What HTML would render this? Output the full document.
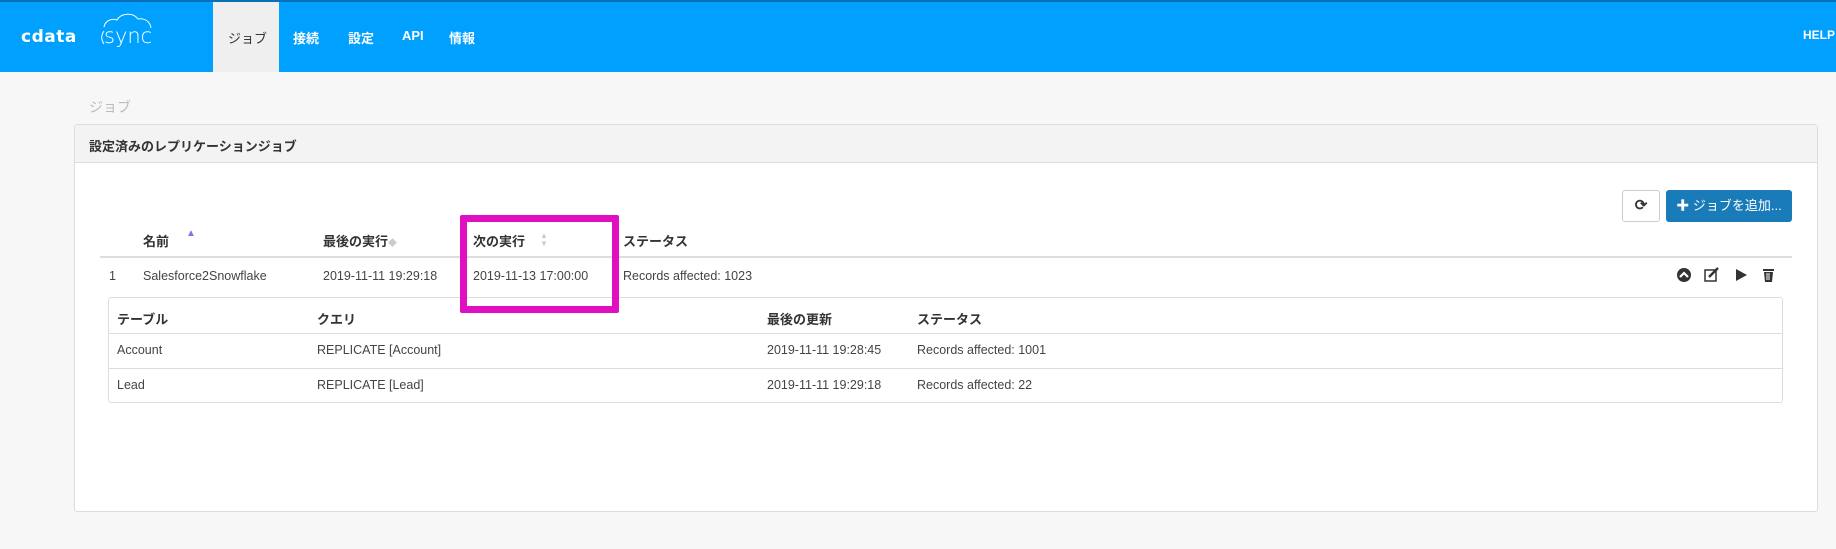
<!DOCTYPE html>
<html><head><meta charset="utf-8"><style>
*{margin:0;padding:0;box-sizing:border-box}
body{width:1836px;height:549px;background:#f7f7f7;font-family:"Liberation Sans","Noto Sans CJK JP",sans-serif;color:#444;position:relative;overflow:hidden;font-size:12.5px}
.a{position:absolute;white-space:nowrap}
.hdr{position:absolute;left:0;top:0;width:1836px;height:72px;background:#00a0ff;border-top:2px solid #0a6fb8}
.nav{color:#fff;font-weight:bold;font-size:13px;top:28px}
.b{font-weight:bold;color:#333;font-size:13px}
.l{position:absolute;height:1px;background:#ddd}
</style></head><body>
<div class="hdr"></div>
<div class="a" style="left:213px;top:2px;width:66px;height:70px;background:#efefef"></div>
<svg class="a" style="left:0;top:0" width="170" height="60" viewBox="0 0 170 60">
<path d="M104 27 C105 21 111 18 117 20 C121 13 133 12 138 19 C144 18 150 21 151 28" fill="none" stroke="#fff" stroke-width="1"/>
<path d="M104 31 C101 35 101 40 104 44" fill="none" stroke="#fff" stroke-width="1"/>
<text x="21" y="42" fill="#fff" font-family="DejaVu Sans" font-weight="bold" font-size="17" letter-spacing="0.5">cdata</text>
<text x="104" y="43" fill="#fff" font-family="DejaVu Sans" font-weight="200" font-size="21">sync</text>
</svg>
<div class="a nav" style="left:228px;color:#333;font-weight:normal">ジョブ</div>
<div class="a nav" style="left:293px">接続</div>
<div class="a nav" style="left:348px">設定</div>
<div class="a nav" style="left:402px">API</div>
<div class="a nav" style="left:449px">情報</div>
<div class="a nav" style="left:1803px;font-size:12px">HELP</div>
<div class="a" style="left:89px;top:97px;color:#bbb;font-size:14px">ジョブ</div>
<div class="a" style="left:74px;top:124px;width:1744px;height:388px;background:#fff;border:1px solid #ddd;border-radius:3px"></div>
<div class="a" style="left:75px;top:125px;width:1742px;height:38px;background:#f3f3f3;border-bottom:1px solid #ddd"></div>
<div class="a b" style="left:89px;top:136px">設定済みのレプリケーションジョブ</div>
<div class="a" style="left:1622px;top:190px;width:38px;height:32px;border:1px solid #ccc;border-radius:3px;background:#fff;text-align:center;line-height:30px;font-size:15px;font-weight:bold;color:#333">⟳</div>
<div class="a" style="left:1666px;top:190px;width:126px;height:32px;background:#1a7bb9;border-radius:3px;color:#fff;text-align:center;line-height:32px;font-size:13px"><b>✚</b> ジョブを追加...</div>
<div class="a b" style="left:143px;top:231px">名前</div>
<div class="a" style="left:186px;top:228px;color:#7a7ad8;font-size:10px">▲</div>
<div class="a b" style="left:323px;top:231px">最後の実行<span style="color:#ccc;font-size:9px">◆</span></div>
<div class="a b" style="left:473px;top:231px">次の実行</div>
<div class="a" style="left:540px;top:232px;color:#ccc;font-size:8px;line-height:8px">▲<br>▼</div>
<div class="a b" style="left:623px;top:231px">ステータス</div>
<div class="l" style="left:100px;top:256px;width:1692px;height:2px"></div>
<div class="a" style="left:109px;top:269px">1</div>
<div class="a" style="left:143px;top:269px">Salesforce2Snowflake</div>
<div class="a" style="left:323px;top:269px">2019-11-11 19:29:18</div>
<div class="a" style="left:473px;top:269px">2019-11-13 17:00:00</div>
<div class="a" style="left:623px;top:269px">Records affected: 1023</div>
<svg class="a" style="left:1676px;top:267px" width="104" height="16">
<circle cx="8" cy="8" r="7" fill="#333"/><path d="M4 10 L8 6 L12 10" stroke="#fff" stroke-width="2.2" fill="none"/>
<rect x="29" y="3" width="11" height="11" fill="none" stroke="#333" stroke-width="1.5"/><path d="M33 10 L42 1" stroke="#333" stroke-width="2.5"/>
<path d="M60 2 L71 8 L60 14Z" fill="#333"/>
<rect x="87" y="2" width="11" height="2" fill="#333"/><path d="M88 5 H97 L96 15 H89Z" fill="#333"/><path d="M91 6V13M93 6V13" stroke="#fff"/>
</svg>
<div class="a" style="left:108px;top:297px;width:1675px;height:106px;border:1px solid #ddd;border-radius:3px"></div>
<div class="a b" style="left:117px;top:309px">テーブル</div>
<div class="a b" style="left:317px;top:309px">クエリ</div>
<div class="a b" style="left:767px;top:309px">最後の更新</div>
<div class="a b" style="left:917px;top:309px">ステータス</div>
<div class="l" style="left:109px;top:333px;width:1673px"></div>
<div class="a" style="left:117px;top:343px">Account</div>
<div class="a" style="left:317px;top:343px">REPLICATE [Account]</div>
<div class="a" style="left:767px;top:343px">2019-11-11 19:28:45</div>
<div class="a" style="left:917px;top:343px">Records affected: 1001</div>
<div class="l" style="left:109px;top:368px;width:1673px"></div>
<div class="a" style="left:117px;top:378px">Lead</div>
<div class="a" style="left:317px;top:378px">REPLICATE [Lead]</div>
<div class="a" style="left:767px;top:378px">2019-11-11 19:29:18</div>
<div class="a" style="left:917px;top:378px">Records affected: 22</div>
<div class="a" style="left:460px;top:215px;width:159px;height:98px;border:7px solid #e010c0;border-radius:2px"></div>
</body></html>
